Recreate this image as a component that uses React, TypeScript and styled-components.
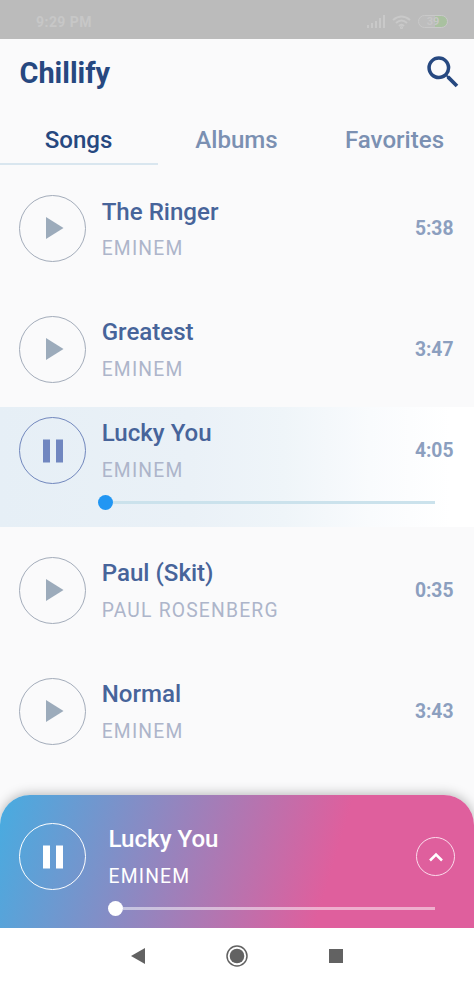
import React from 'react';
import styled, { createGlobalStyle } from 'styled-components';
import { MdSearch } from 'react-icons/md';

const GlobalStyle = createGlobalStyle`
  * { box-sizing: border-box; }
  body { margin: 0; background: #fafafa; font-family: Roboto, sans-serif; }
`;

const Screen = styled.div`
  display: flex;
  flex-direction: column;
  width: 474px;
  height: 985px;
  overflow: hidden;
  background: #fafafb;
`;

const StatusBar = styled.div`
  display: flex;
  flex: none;
  align-items: center;
  justify-content: space-between;
  height: 39.3px;
  padding: 4px 26px 0 36px;
  background: #bbbbbb;
  color: #c7c7c7;
  font-size: 14px;
  font-weight: 700;
  letter-spacing: 0.45px;
`;

const StatusIcons = styled.div`
  display: flex;
  align-items: center;
  gap: 7px;
`;

const Battery = styled.div`
  display: flex;
  align-items: center;
  justify-content: center;
  width: 30px;
  height: 13px;
  border: 1.5px solid #c9c9c9;
  border-radius: 7px;
  background: linear-gradient(90deg, #bdbdbd 58%, #a9c1a0 58%);
  font-size: 11px;
  letter-spacing: 0;
`;

const Header = styled.header`
  display: flex;
  flex: none;
  align-items: center;
  justify-content: space-between;
  height: 66.7px;
  padding: 0 10px 0 19.5px;
  color: #264880;
`;

const Brand = styled.h1`
  margin: 0;
  font-size: 28.9px;
  line-height: 34px;
  font-weight: 700;
`;

const Tabs = styled.nav`
  display: grid;
  flex: none;
  grid-template-columns: repeat(3, 1fr);
  height: 59.5px;
`;

const Tab = styled.div<{ $active?: boolean }>`
  display: flex;
  align-items: center;
  justify-content: center;
  margin-bottom: 0.8px;
  padding: 11px 1px 0 0;
  border-bottom: 2px solid ${(p) => (p.$active ? '#d9e6ef' : 'transparent')};
  color: ${(p) => (p.$active ? '#264880' : '#7b90b2')};
  font-size: 24.1px;
  font-weight: 500;
`;

const SongList = styled.main`
  flex: none;
  height: 630px;
`;

const SongRow = styled.div<{ $active?: boolean }>`
  display: flex;
  flex-direction: column;
  height: 120.6px;
  padding: ${(p) => (p.$active ? '10.5px' : '30px')} 20.5px 0 19px;
  background: ${(p) =>
    p.$active
      ? 'linear-gradient(90deg, #e6eff6 0%, #eaf1f7 40%, #eff5f9 60%, #f9fbfd 78%, #ffffff 95%)'
      : 'transparent'};
`;

const RowBody = styled.div`
  display: flex;
  flex: none;
  align-items: center;
  height: 67px;
`;

const RoundButton = styled.div<{ $tone: string; $size?: number; $stroke?: number }>`
  display: flex;
  flex: none;
  align-items: center;
  justify-content: center;
  width: ${(p) => p.$size ?? 67}px;
  height: ${(p) => p.$size ?? 67}px;
  border: ${(p) => p.$stroke ?? 1}px solid ${(p) => p.$tone};
  border-radius: 50%;
`;

const Meta = styled.div<{ $gap: number }>`
  flex: 1;
  margin-left: ${(p) => p.$gap}px;
`;

const Title = styled.div<{ $light?: boolean }>`
  color: ${(p) => (p.$light ? '#ffffff' : '#47649a')};
  font-size: 24.1px;
  line-height: 28px;
  font-weight: 500;
`;

const Artist = styled.div<{ $light?: boolean }>`
  margin-top: 11.6px;
  color: ${(p) => (p.$light ? '#ffffff' : '#adb5ca')};
  font-size: 19.3px;
  line-height: 23px;
  letter-spacing: 1.2px;
`;

const Duration = styled.div`
  color: #8c9fbf;
  font-size: 19.3px;
  font-weight: 700;
`;

const Slider = styled.div<{ $gap: number; $light?: boolean }>`
  display: flex;
  align-items: center;
  height: 15px;
  margin-top: 11px;
  margin-left: ${(p) => p.$gap}px;
  color: ${(p) => (p.$light ? '#ffffff' : '#2196f3')};
`;

const Thumb = styled.div`
  flex: none;
  width: 15px;
  height: 15px;
  border-radius: 50%;
  background: currentColor;
`;

const Track = styled.div<{ $light?: boolean }>`
  flex: 1;
  height: 2.4px;
  margin-right: ${(p) => (p.$light ? 20 : 18.5)}px;
  background: ${(p) => (p.$light ? 'rgba(255,255,255,0.5)' : '#cbe2ec')};
`;

const MiniPlayer = styled.section`
  z-index: 1;
  flex: none;
  height: 132.5px;
  padding: 27.6px 19px 0;
  border-radius: 30px 30px 0 0;
  background: linear-gradient(106.7deg, #47ace1 0%, #df5f9d 69%);
  box-shadow: 0 -1px 12px rgba(0, 0, 0, 0.28);
`;

const NavBar = styled.footer`
  z-index: 2;
  display: flex;
  flex: none;
  align-items: center;
  justify-content: center;
  height: 57px;
  padding-right: 1px;
  background: #ffffff;
`;

const NavKey = styled.div`
  display: flex;
  justify-content: center;
  width: 99px;
`;

const PlayGlyph = () => (
  <svg width="65" height="65" viewBox="0 0 65 65" fill="#9cabbb">
    <path d="M26 21v22l17.500-11z" />
  </svg>
);

const PauseGlyph = ({ fill }: { fill: string }) => (
  <svg width="20" height="24" viewBox="0 0 20 24" fill={fill}>
    <path d="M0 .5h7v23H0zM13 .5h7v23h-7z" />
  </svg>
);

const songs = [
  { title: 'The Ringer', artist: 'EMINEM', time: '5:38' },
  { title: 'Greatest', artist: 'EMINEM', time: '3:47' },
  { title: 'Lucky You', artist: 'EMINEM', time: '4:05', active: true },
  { title: 'Paul (Skit)', artist: 'PAUL ROSENBERG', time: '0:35' },
  { title: 'Normal', artist: 'EMINEM', time: '3:43' },
];

export default function App() {
  return (
    <Screen>
      <GlobalStyle />
      <StatusBar>
        <span>9:29 PM</span>
        <StatusIcons>
          <svg width="18" height="13" viewBox="0 0 18 13" fill="#c9c9c9">
            <path d="M0 10h2v3H0zM4 8h2v5H4zM8 6h2v7H8zM12 3h2v10h-2zM16 0h2v13h-2z" />
          </svg>
          <svg width="19" height="14" viewBox="0 0 19 14" fill="none" stroke="#c9c9c9" strokeWidth="2">
            <path d="M1 5Q9.500-2 18 5M4 8q5.500-5 11 0M7 11q2.500-2.500 5 0" />
            <circle cx="9.500" cy="12.500" r=".6" />
          </svg>
          <Battery>39</Battery>
        </StatusIcons>
      </StatusBar>
      <Header>
        <Brand>Chillify</Brand>
        <MdSearch size={42.5} />
      </Header>
      <Tabs>
        <Tab $active>Songs</Tab>
        <Tab>Albums</Tab>
        <Tab>Favorites</Tab>
      </Tabs>
      <SongList>
        {songs.map((s) => (
          <SongRow key={s.title} $active={s.active}>
            <RowBody>
              <RoundButton $tone={s.active ? '#7187bd' : '#a3acba'}>
                {s.active ? <PauseGlyph fill="#7187c0" /> : <PlayGlyph />}
              </RoundButton>
              <Meta $gap={15.7}>
                <Title>{s.title}</Title>
                <Artist>{s.artist}</Artist>
              </Meta>
              <Duration>{s.time}</Duration>
            </RowBody>
            {s.active && (
              <Slider $gap={79}>
                <Thumb />
                <Track />
              </Slider>
            )}
          </SongRow>
        ))}
      </SongList>
      <MiniPlayer>
        <RowBody>
          <RoundButton $tone="#ffffff" $stroke={1.4}>
            <PauseGlyph fill="#ffffff" />
          </RoundButton>
          <Meta $gap={22.5}>
            <Title $light>Lucky You</Title>
            <Artist $light>EMINEM</Artist>
          </Meta>
          <RoundButton $tone="#fbdcec" $size={39} $stroke={1.4}>
            <svg width="14" height="10" viewBox="0 0 14 10" fill="none" stroke="#fff" strokeWidth="2.500">
              <path d="M1 8.500l6-6 6 6" />
            </svg>
          </RoundButton>
        </RowBody>
        <Slider $gap={89} $light>
          <Thumb />
          <Track $light />
        </Slider>
      </MiniPlayer>
      <NavBar>
        <NavKey>
          <svg width="14" height="16" viewBox="0 0 14 16" fill="#626262">
            <path d="M0 8L14 0v16z" />
          </svg>
        </NavKey>
        <NavKey>
          <svg width="22" height="22" viewBox="0 0 22 22">
            <circle cx="11" cy="11" r="10" fill="none" stroke="#626262" strokeWidth="1.500" />
            <circle cx="11" cy="11" r="7.300" fill="#626262" />
          </svg>
        </NavKey>
        <NavKey>
          <svg width="14" height="14" viewBox="0 0 14 14" fill="#626262">
            <path d="M0 0h14v14H0z" />
          </svg>
        </NavKey>
      </NavBar>
    </Screen>
  );
}
